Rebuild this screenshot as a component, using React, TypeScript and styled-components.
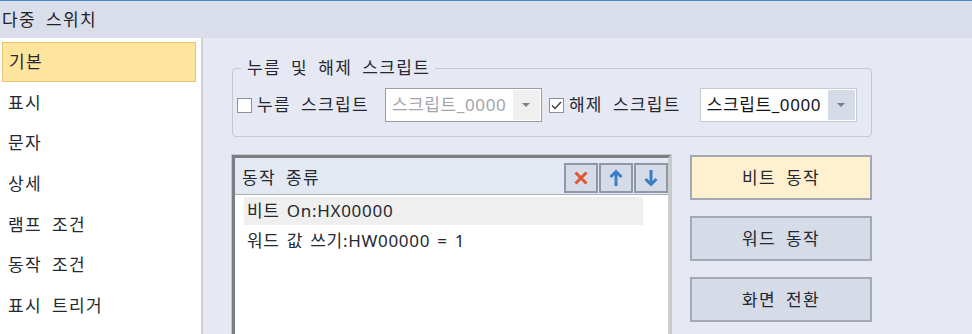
import React from 'react';
import styled, { createGlobalStyle } from 'styled-components';

const GlobalStyle = createGlobalStyle`
    html, body {
        margin: 0;
        padding: 0;
        width: 972px;
        height: 334px;
        overflow: hidden;
        background: #e6e9f3;
    }
    * {
        box-sizing: border-box;
    }
`;

const Window = styled.div`
    width: 972px;
    height: 334px;
    display: flex;
    flex-direction: column;
    font-family: "Noto Sans", "Noto Sans CJK KR", sans-serif;
    font-size: 17px;
    line-height: 20px;
    letter-spacing: 1.3px;
    word-spacing: 4.5px;
    color: #252830;
    background: #e6e9f3;
    overflow: hidden;
`;

const TitleBar = styled.div`
    height: 38px;
    flex: none;
    display: flex;
    align-items: center;
    padding-left: 2px;
    background: #d9deea;
    border-top: 1px solid #4a86c5;
    color: #1e2128;
`;

const Body = styled.div`
    flex: 1;
    display: flex;
    min-height: 0;
`;

const Sidebar = styled.div`
    width: 203px;
    flex: none;
    background: #ffffff;
    border-right: 2px solid #cdd0d6;
    padding: 4px 5px 0 2px;
    display: flex;
    flex-direction: column;
    gap: 0.7px;
`;

const NavItem = styled.div<{ $active?: boolean }>`
    height: 40px;
    display: flex;
    align-items: center;
    padding-left: 6px;
    background: ${p => (p.$active ? '#fee59d' : 'transparent')};
    border: ${p => (p.$active ? '1px solid #e7c36e' : 'none')};
`;

const Main = styled.div`
    flex: 1;
    padding: 19px 0 0 28px;
    display: flex;
    flex-direction: column;
`;

const Group = styled.fieldset`
    margin: 0 0 0 1px;
    width: 640px;
    border: 1px solid #c4c8d1;
    border-radius: 4px;
    padding: 9px 4px 14px 4px;
    min-width: 0;
`;

const Legend = styled.legend`
    margin-left: 4px;
    padding: 0 5px 0 6px;
    line-height: 22px;
`;

const ScriptRow = styled.div`
    display: flex;
    align-items: center;
`;

const CheckLabel = styled.label`
    display: flex;
    align-items: center;
    gap: 5px;
    white-space: nowrap;
`;

const Box = styled.span`
    width: 15px;
    height: 15px;
    flex: none;
    border: 1px solid #8d9099;
    background: #ffffff;
    display: flex;
    align-items: center;
    justify-content: center;
`;

const Combo = styled.div<{ $disabled?: boolean }>`
    width: 157px;
    height: 34px;
    flex: none;
    display: flex;
    border: 1px solid ${p => (p.$disabled ? '#9a9ca2' : '#c7cad1')};
    background: #ffffff;
    color: ${p => (p.$disabled ? '#a3a5ab' : '#111318')};
    letter-spacing: 0.6px;
`;

const ComboText = styled.div`
    flex: 1;
    display: flex;
    align-items: center;
    padding-left: 6px;
    white-space: nowrap;
    overflow: hidden;
`;

const ComboArrow = styled.div<{ $disabled?: boolean }>`
    width: 27px;
    flex: none;
    margin: 1px;
    display: flex;
    align-items: center;
    justify-content: center;
    background: ${p => (p.$disabled ? '#efefef' : '#d5dbe7')};
    &::after {
        content: '';
        border-left: 4px solid transparent;
        border-right: 4px solid transparent;
        border-top: 4px solid #7c7f86;
    }
`;

const Lower = styled.div`
    margin-top: 18px;
    display: flex;
    gap: 19px;
    align-items: flex-start;
    flex: 1;
`;

const ListPanel = styled.div`
    width: 439px;
    height: 200px;
    display: flex;
    flex-direction: column;
    border-top: 3px solid #7d7e81;
    border-left: 3px solid #7d7e81;
    border-right: 3px solid #cbccd0;
    outline: 1px solid #c5c8ce;
    margin-left: 1px;
    background: #ffffff;
`;

const ListHeader = styled.div`
    height: 37px;
    flex: none;
    display: flex;
    align-items: flex-start;
    justify-content: space-between;
    padding-left: 7px;
    padding-top: 5px;
    background: #e4e8f2;
    border-bottom: 1px solid #a9aebb;
`;

const HeaderTitle = styled.span`
    line-height: 29px;
`;

const ToolGroup = styled.div`
    display: flex;
    gap: 1px;
`;

const ToolButton = styled.button`
    width: 34px;
    height: 30px;
    padding: 0;
    display: flex;
    align-items: center;
    justify-content: center;
    background: #d5dbe7;
    border: 2px solid #8f98a8;
`;

const ListBody = styled.div`
    padding: 2px 25px 0 9px;
    display: flex;
    flex-direction: column;
    gap: 2px;
`;

const ListItem = styled.div<{ $selected?: boolean }>`
    height: 28px;
    display: flex;
    align-items: center;
    padding-left: 3px;
    letter-spacing: 0.7px;
    word-spacing: 2px;
    background: ${p => (p.$selected ? '#efefef' : 'transparent')};
`;

const ActionColumn = styled.div`
    display: flex;
    flex-direction: column;
    gap: 16px;
`;

const ActionButton = styled.button<{ $active?: boolean }>`
    width: 182px;
    height: 45px;
    font: inherit;
    letter-spacing: inherit;
    word-spacing: inherit;
    color: #252830;
    background: ${p => (p.$active ? '#fff0cf' : '#d5dbe7')};
    border: 2px solid #a2a8b4;
`;

const DeleteIcon = () => (
    <svg width="16" height="16" viewBox="0 0 16 16">
        <path d="M2.5 2.5 L13.5 13.5 M13.5 2.5 L2.5 13.5" stroke="#e2552f" strokeWidth="3" />
    </svg>
);

const ArrowIcon = ({ down }: { down?: boolean }) => (
    <svg width="14" height="18" viewBox="0 0 14 18" style={down ? { transform: 'rotate(180deg)' } : undefined}>
        <path d="M7 17 V3 M1.5 8 L7 2.5 L12.5 8" stroke="#3a7fc4" strokeWidth="3" fill="none" />
    </svg>
);

const CheckMark = () => (
    <svg width="11" height="9" viewBox="0 0 11 9">
        <path d="M1 4.5 L4 7.5 L10 1" stroke="#3a3c42" strokeWidth="1.4" fill="none" />
    </svg>
);

const navItems = ['기본', '표시', '문자', '상세', '램프 조건', '동작 조건', '표시 트리거'];

export default function App() {
    return (
        <Window>
            <GlobalStyle />
            <TitleBar>다중 스위치</TitleBar>
            <Body>
                <Sidebar>
                    {navItems.map((item, i) => (
                        <NavItem key={item} $active={i === 0}>{item}</NavItem>
                    ))}
                </Sidebar>
                <Main>
                    <Group>
                        <Legend>누름 및 해제 스크립트</Legend>
                        <ScriptRow>
                            <CheckLabel>
                                <Box />
                                누름 스크립트
                            </CheckLabel>
                            <Combo $disabled style={{ marginLeft: 16 }}>
                                <ComboText>스크립트_0000</ComboText>
                                <ComboArrow $disabled />
                            </Combo>
                            <CheckLabel style={{ marginLeft: 7 }}>
                                <Box><CheckMark /></Box>
                                해제 스크립트
                            </CheckLabel>
                            <Combo style={{ marginLeft: 19 }}>
                                <ComboText>스크립트_0000</ComboText>
                                <ComboArrow />
                            </Combo>
                        </ScriptRow>
                    </Group>
                    <Lower>
                        <ListPanel>
                            <ListHeader>
                                <HeaderTitle>동작 종류</HeaderTitle>
                                <ToolGroup>
                                    <ToolButton><DeleteIcon /></ToolButton>
                                    <ToolButton><ArrowIcon /></ToolButton>
                                    <ToolButton><ArrowIcon down /></ToolButton>
                                </ToolGroup>
                            </ListHeader>
                            <ListBody>
                                <ListItem $selected>비트 On:HX00000</ListItem>
                                <ListItem>워드 값 쓰기:HW00000 = 1</ListItem>
                            </ListBody>
                        </ListPanel>
                        <ActionColumn>
                            <ActionButton $active>비트 동작</ActionButton>
                            <ActionButton>워드 동작</ActionButton>
                            <ActionButton>화면 전환</ActionButton>
                        </ActionColumn>
                    </Lower>
                </Main>
            </Body>
        </Window>
    );
}
